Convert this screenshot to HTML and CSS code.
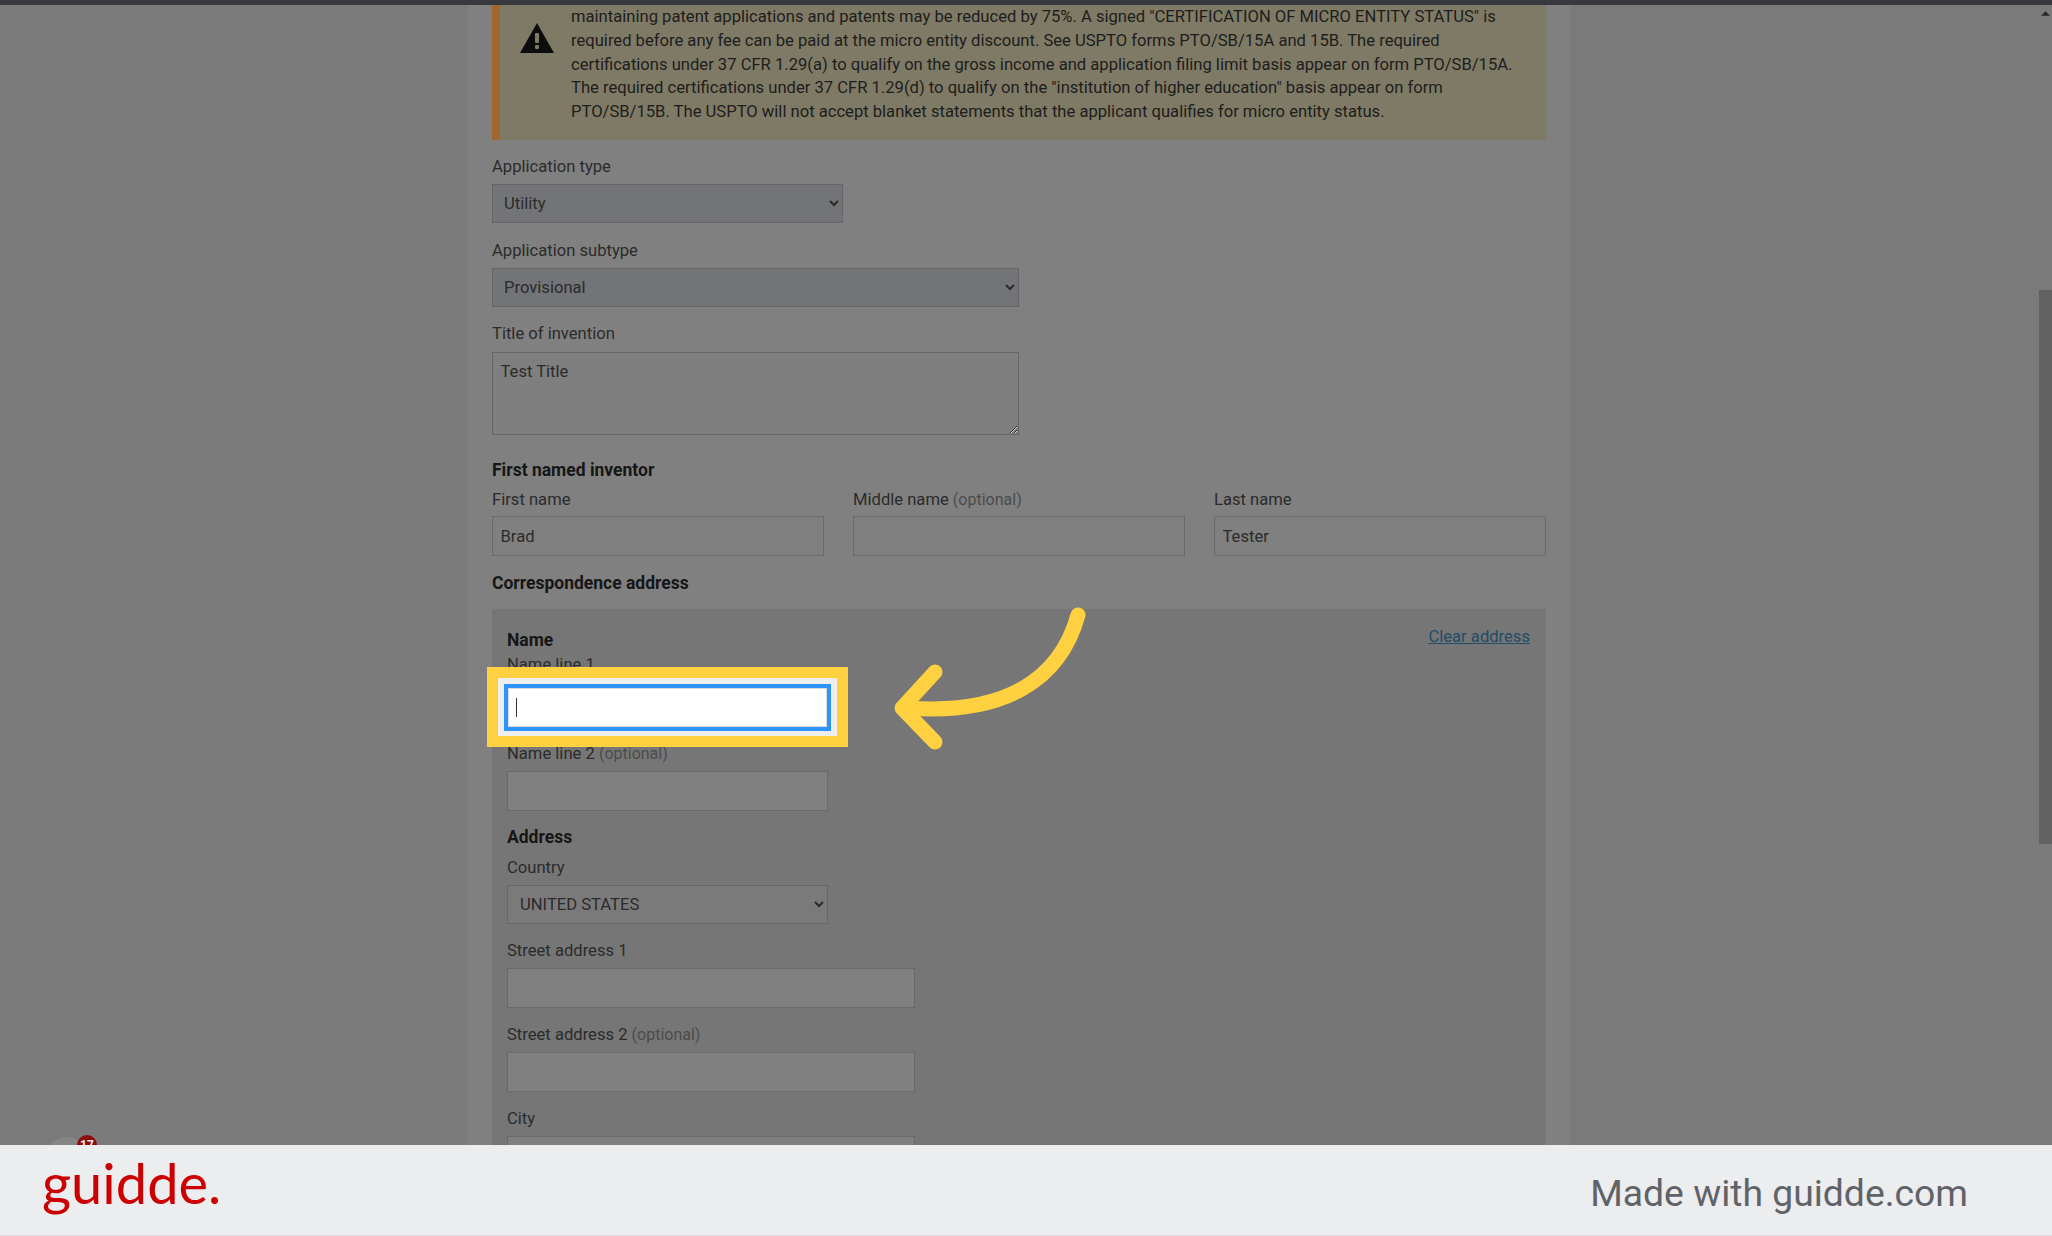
FILE: index.html
```html
<!DOCTYPE html>
<html lang="en">
<head>
<meta charset="utf-8">
<title>Patent application form</title>
<link rel="stylesheet" href="styles.css">
</head>
<body>
<div class="page">
  <div class="topbar"></div>
  <div class="viewport">
    <div class="gutter-left"></div>
    <main class="panel">
      <section class="alert">
        <svg class="alert-icon" viewBox="0 0 34 30" aria-hidden="true"><path d="M17 0 L34 30 H0 Z" fill="#0c0c0c"/><rect x="15" y="10" width="4" height="10" rx="1" fill="#7f7a65"/><circle cx="17" cy="24" r="2.2" fill="#7f7a65"/></svg>
        <p class="alert-text">maintaining patent applications and patents may be reduced by 75%. A signed "CERTIFICATION OF MICRO ENTITY STATUS" is<br>required before any fee can be paid at the micro entity discount. See USPTO forms PTO/SB/15A and 15B. The required<br>certifications under 37 CFR 1.29(a) to qualify on the gross income and application filing limit basis appear on form PTO/SB/15A.<br>The required certifications under 37 CFR 1.29(d) to qualify on the "institution of higher education" basis appear on form<br>PTO/SB/15B. The USPTO will not accept blanket statements that the applicant qualifies for micro entity status.</p>
      </section>

      <label class="label first-label">Application type</label>
      <select class="select disabled w-type"><option>Utility</option></select>

      <label class="label gap-label">Application subtype</label>
      <select class="select disabled w-wide"><option>Provisional</option></select>

      <label class="label gap-label-b">Title of invention</label>
      <textarea class="textarea w-wide">Test Title</textarea>

      <h3 class="heading inventor-heading">First named inventor</h3>
      <div class="name-grid">
        <div class="name-col"><label class="label">First name</label><input class="input tight" value="Brad"></div>
        <div class="name-col"><label class="label">Middle name <span class="optional">(optional)</span></label><input class="input tight"></div>
        <div class="name-col"><label class="label">Last name</label><input class="input tight" value="Tester"></div>
      </div>

      <h3 class="heading corr-heading">Correspondence address</h3>
      <section class="address">
        <div class="address-head">
          <h3 class="heading">Name</h3>
          <a class="clear-link" href="#">Clear address</a>
        </div>
        <label class="label line1-label">Name line 1</label>
        <input class="input w-name">
        <label class="label line2-label">Name line 2 <span class="optional">(optional)</span></label>
        <input class="input w-name">
        <h3 class="heading addr-heading">Address</h3>
        <label class="label country-label">Country</label>
        <select class="select plain w-name"><option>UNITED STATES</option></select>
        <label class="label street-label">Street address 1</label>
        <input class="input w-street">
        <label class="label street-label">Street address 2 <span class="optional">(optional)</span></label>
        <input class="input w-street">
        <label class="label street-label">City</label>
        <input class="input w-street">
      </section>
    </main>
    <div class="gutter-right"></div>
    <div class="scrollbar">
      <svg class="scroll-arrow" viewBox="0 0 12 6" aria-hidden="true"><path d="M6 0 L12 6 H0 Z" fill="#2a2a2a"/></svg>
      <div class="scroll-thumb"></div>
    </div>
  </div>
  <footer class="footer">
    <div class="logo">guidde.</div>
    <div class="made">Made with guidde.com</div>
  </footer>

  <div class="chat-bubble"></div>
  <div class="chat-badge">17</div>

  <div class="highlight">
    <div class="highlight-inner">
      <div class="focus-field"><span class="caret"></span></div>
    </div>
  </div>

  <svg class="arrow" viewBox="0 0 210 160" aria-hidden="true">
    <path d="M198 15 C180 80 125 115 28 108" fill="none" stroke="#ffd040" stroke-width="15" stroke-linecap="round"/>
    <path d="M55 72 L22 108 L55 142" fill="none" stroke="#ffd040" stroke-width="15" stroke-linecap="round" stroke-linejoin="round"/>
  </svg>
</div>
</body>
</html>
```
FILE: styles.css
```css
* { box-sizing: border-box; }
html, body { margin: 0; padding: 0; }
body { font-family: "Roboto", "Liberation Sans", sans-serif; background: #7a7a7a; }
.page { position: relative; width: 2052px; height: 1236px; overflow: hidden; display: flex; flex-direction: column; }
.topbar { height: 5px; background: #37393f; flex: none; }
.viewport { flex: 1; min-height: 0; display: flex; }
.gutter-left { width: 468px; background: #7b7b7b; flex: none; }
.panel { width: 1102px; flex: none; background: #808080; padding: 0 24px; overflow: hidden; }
.gutter-right { flex: 1; background: #7a7a7a; }
.scrollbar { width: 13px; background: #7a7a7a; position: relative; flex: none; }
.scroll-arrow { position: absolute; left: 2px; top: 6px; width: 9px; height: 5px; }
.scroll-thumb { position: absolute; left: 0; right: 0; top: 285px; height: 554px; background: #626262; }

.alert { width: 1054px; height: 135px; background: #7f7a65; border-left: 8px solid #a5652e; display: flex; }
.alert-icon { width: 34px; height: 30px; margin: 18px 0 0 20px; flex: none; }
.alert-text { margin: 0 0 0 17px; font-size: 16.6px; line-height: 23.8px; color: #1d1d1d; white-space: nowrap; }

.label { display: block; font-size: 16.6px; line-height: 20px; color: #2b2b2b; }
.optional { color: #4c4c4c; font-size: 16px; }
.first-label { margin-top: 17px; }
.gap-label { margin-top: 18px; }
.gap-label-b { margin-top: 17px; }
.street-label { margin-top: 17px; }

.select { display: block; height: 39px; margin-top: 7px; font: 16.6px "Roboto", sans-serif; color: #2b2b2b; border: 1px solid #666; border-radius: 0; padding: 0 7px; }
.select.disabled { background: #727477; }
.select.plain { background: #7a7a7a; padding: 0 8px; }
.w-type { width: 351px; }
.w-wide { width: 527px; }
.w-name { width: 321px; }
.w-street { width: 408px; }

.textarea { display: block; height: 83px; margin-top: 8px; background: #7f7f7f; border: 1px solid #666; padding: 8px 7.5px; font: 16.6px/22px "Roboto", sans-serif; color: #2b2b2b; border-radius: 0; outline: none; }
.input { display: block; width: 100%; height: 40px; margin-top: 7px; background: #808080; border: 1px solid #6a6a6a; padding: 0 7.5px; font: 16.6px "Roboto", sans-serif; color: #2b2b2b; border-radius: 0; outline: none; }
.input.tight { margin-top: 6px; }
.input.w-name { width: 321px; }
.input.w-street { width: 408px; }

.heading { margin: 0; font-size: 17.5px; line-height: 22px; font-weight: 700; color: #161616; }
.inventor-heading { margin-top: 24px; }
.name-grid { width: 1054px; display: grid; grid-template-columns: 332px 332px 332px; column-gap: 29px; margin-top: 9px; }
.corr-heading { margin-top: 16px; }

.address { width: 1054px; margin-top: 15px; background: #767676; padding: 20px 16px 0 15px; height: 600px; overflow: hidden; }
.address-head { display: flex; justify-content: space-between; align-items: flex-start; }
.clear-link { font-size: 16.6px; line-height: 20px; color: #1f4c66; text-decoration: underline; margin-top: -2px; }
.line1-label { margin-top: 4px; }
.line2-label { margin-top: 22px; }
.addr-heading { margin-top: 15px; }
.country-label { margin-top: 10px; }

.footer { height: 91px; flex: none; background: #ecedef; border-bottom: 1px solid #e0d8e0; display: flex; justify-content: space-between; align-items: flex-start; position: relative; z-index: 2; padding: 0 84px 0 42px; }
.logo { font-family: "Lato", sans-serif; font-size: 56px; line-height: 72px; color: #cc0000; font-weight: 400; margin-top: 2px; }
.made { font-size: 37.3px; line-height: 44px; color: #5f6368; margin-top: 26px; }

.chat-bubble { position: absolute; left: 45px; top: 1137px; width: 44px; height: 44px; border-radius: 50%; background: #868686; }
.chat-badge { position: absolute; left: 77px; top: 1135px; width: 20px; height: 20px; border-radius: 50%; background: #8c0b0b; color: #eee; font-size: 12px; line-height: 20px; font-weight: 700; text-align: center; }

.highlight { position: absolute; left: 487px; top: 667px; width: 361px; height: 80px; border: 11px solid #ffd040; background: #eeeeee; z-index: 3; }
.highlight-inner { padding: 6px; height: 100%; }
.focus-field { height: 47px; border: 4px solid #2e93fa; background: #fff; box-shadow: inset 0 0 0 1px #d8d8d8; position: relative; }
.caret { position: absolute; left: 8px; top: 10px; width: 1px; height: 19px; background: #333; }

.arrow { position: absolute; left: 880px; top: 600px; width: 210px; height: 160px; z-index: 3; }
```
